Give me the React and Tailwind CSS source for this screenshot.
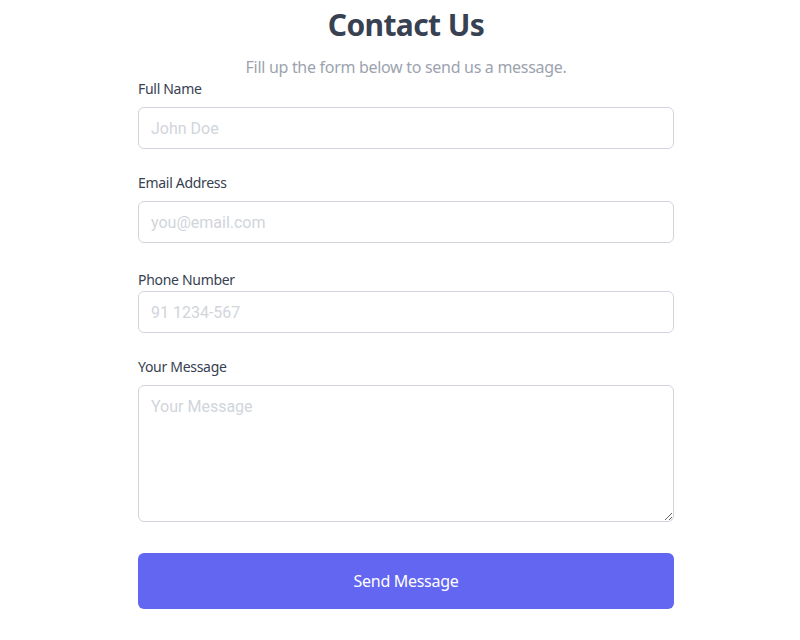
export default function App() {
  const inputCls =
    "block w-full h-[42px] border border-[#d1d5db] rounded-md px-3 text-base text-[#374151] placeholder:text-[#d1d5db] bg-white outline-none";
  const labelCls = "block text-sm leading-5 text-[#374151] tracking-[-0.3px]";
  return (
    <div className="min-h-screen bg-white" style={{ fontFamily: '"Noto Sans", "Open Sans", sans-serif' }}>
      <div className="w-[548px] mx-auto pl-3 pt-[7px]">
        <h1 className="text-3xl leading-9 font-bold text-[#374151] text-center tracking-[-0.6px]">Contact Us</h1>
        <p className="mt-3 text-base leading-6 text-[#9ca3af] text-center tracking-[-0.3px]">
          Fill up the form below to send us a message.
        </p>
        <form onSubmit={(e) => e.preventDefault()}>
          <label className={labelCls}>Full Name</label>
          <input
            className={inputCls + " mt-2"}
            style={{ fontFamily: 'Roboto, sans-serif' }}
            placeholder="John Doe"
          />
          <label className={labelCls + " mt-6"}>Email Address</label>
          <input
            className={inputCls + " mt-2"}
            style={{ fontFamily: 'Roboto, sans-serif' }}
            placeholder="you@email.com"
          />
          <label className={labelCls + " mt-[27px]"}>Phone Number</label>
          <input
            className={inputCls + " mt-px"}
            style={{ fontFamily: 'Roboto, sans-serif' }}
            placeholder="91 1234-567"
          />
          <label className={labelCls + " mt-6"}>Your Message</label>
          <textarea
            className="block w-full h-[137px] mt-2 border border-[#d1d5db] rounded-md px-3 pt-[9px] pb-2 text-base leading-6 text-[#374151] placeholder:text-[#d1d5db] bg-white outline-none"
            style={{ fontFamily: 'Roboto, sans-serif' }}
            placeholder="Your Message"
          />
          <button
            type="submit"
            className="block w-full h-[56px] mt-[31px] bg-[#6366f1] text-white text-base rounded-md tracking-[-0.3px]"
          >
            Send Message
          </button>
        </form>
      </div>
    </div>
  );
}
